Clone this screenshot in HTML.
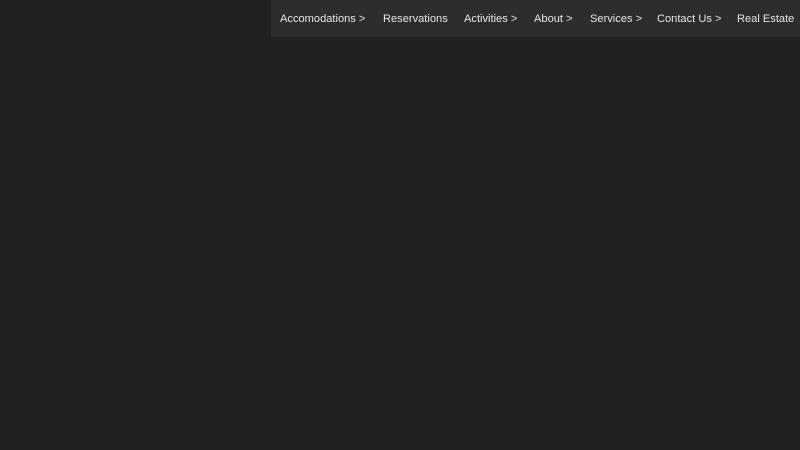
<!DOCTYPE html>
<html><head><style>
html,body{margin:0;width:800px;height:450px;background:#212121;overflow:hidden}
.nav{position:absolute;left:271px;top:0;width:529px;height:37px;background:#2d2d2d}
.nav span{position:absolute;top:12px;font:11.1px "Liberation Sans",sans-serif;color:#e6e6e6;white-space:nowrap;line-height:14px}
</style></head><body>
<div class="nav">
<span style="left:9px">Accomodations &gt;</span>
<span style="left:112px">Reservations</span>
<span style="left:193px">Activities &gt;</span>
<span style="left:263px">About &gt;</span>
<span style="left:319px">Services &gt;</span>
<span style="left:386px">Contact Us &gt;</span>
<span style="left:466px">Real Estate</span>
</div>
</body></html>
